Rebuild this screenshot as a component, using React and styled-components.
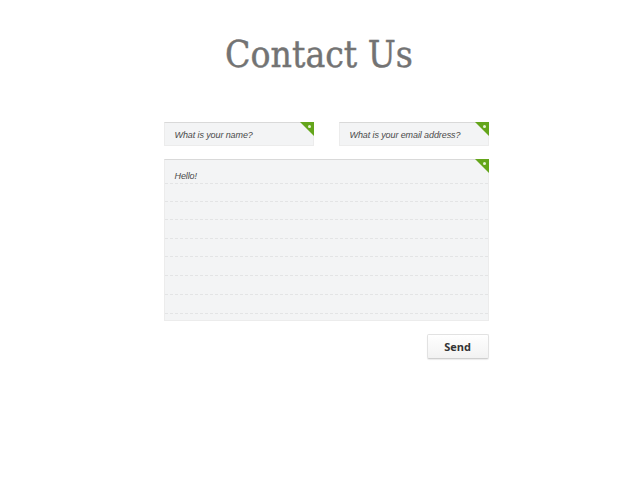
import React from "react";
import styled, { createGlobalStyle } from "styled-components";

const Global = createGlobalStyle`
  html, body { margin: 0; padding: 0; background: #fff; }
  body { font-family: "Liberation Sans", Arial, sans-serif; }
`;

const Page = styled.div`
  width: 638px;
  height: 479px;
  display: flex;
  flex-direction: column;
  align-items: center;
`;

const Title = styled.h1`
  margin: 32px 0 0;
  height: 45px;
  font-family: "DejaVu Serif Condensed", "DejaVu Serif", serif;
  font-stretch: condensed;
  font-weight: normal;
  font-size: 37px;
  line-height: 46px;
  color: #737373;
  -webkit-text-stroke: 0.4px #737373;
`;

const Form = styled.form`
  width: 325px;
  margin: 45px 0 0 14px;
  display: flex;
  flex-direction: column;
`;

const Row = styled.div`
  display: flex;
  justify-content: space-between;
`;

const Field = styled.div`
  position: relative;
  box-sizing: border-box;
  width: ${(p) => p.width || "150px"};
  height: ${(p) => p.height || "24px"};
  background: #f3f4f5;
  border: 1px solid #ececec;
  border-top-color: #d9d9d9;
  font-style: italic;
  font-size: 9px;
  letter-spacing: -0.1px;
  color: #4a4a4a;
  padding: 1px 10px 0;
  display: flex;
  flex-direction: column;
  justify-content: center;
`;

const Corner = styled.span`
  position: absolute;
  top: -1px;
  right: -1px;
  width: 0;
  height: 0;
  border-top: 14px solid #64a51b;
  border-left: 14px solid transparent;
  &::after {
    content: "";
    position: absolute;
    top: -11px;
    right: 3px;
    width: 3px;
    height: 3px;
    border-radius: 50%;
    background: #e8f3d8;
  }
`;

const Area = styled(Field)`
  margin-top: 13px;
  padding: 0;
  justify-content: flex-start;
`;

const Line = styled.div`
  box-sizing: border-box;
  height: ${(p) => p.h}px;
  border-bottom: 1px dashed #e3e4e5;
  padding: 0 0 2px 10px;
  display: flex;
  align-items: flex-end;
`;

const Actions = styled.div`
  display: flex;
  justify-content: flex-end;
  margin-top: 13px;
`;

const Button = styled.button`
  width: 62px;
  height: 25px;
  border: 1px solid #e2e2e2;
  border-bottom-color: #cfcfcf;
  background: linear-gradient(#ffffff, #f2f2f2);
  border-radius: 2px;
  font-family: "Open Sans", "Noto Sans", sans-serif;
  font-weight: bold;
  font-size: 11px;
  color: #333;
  padding: 0;
  box-shadow: 0 1px 1px rgba(0, 0, 0, 0.08);
`;

const lines = [24, 18, 18, 19, 18, 19, 19, 19];

export default function App() {
  return (
    <>
      <Global />
      <Page>
        <Title>Contact Us</Title>
        <Form>
          <Row>
            <Field>
              What is your name?
              <Corner />
            </Field>
            <Field>
              What is your email address?
              <Corner />
            </Field>
          </Row>
          <Area width="325px" height="162px">
            {lines.map((h, i) => (
              <Line key={i} h={h}>
                {i === 0 ? "Hello!" : ""}
              </Line>
            ))}
            <Corner />
          </Area>
          <Actions>
            <Button type="button">Send</Button>
          </Actions>
        </Form>
      </Page>
    </>
  );
}
